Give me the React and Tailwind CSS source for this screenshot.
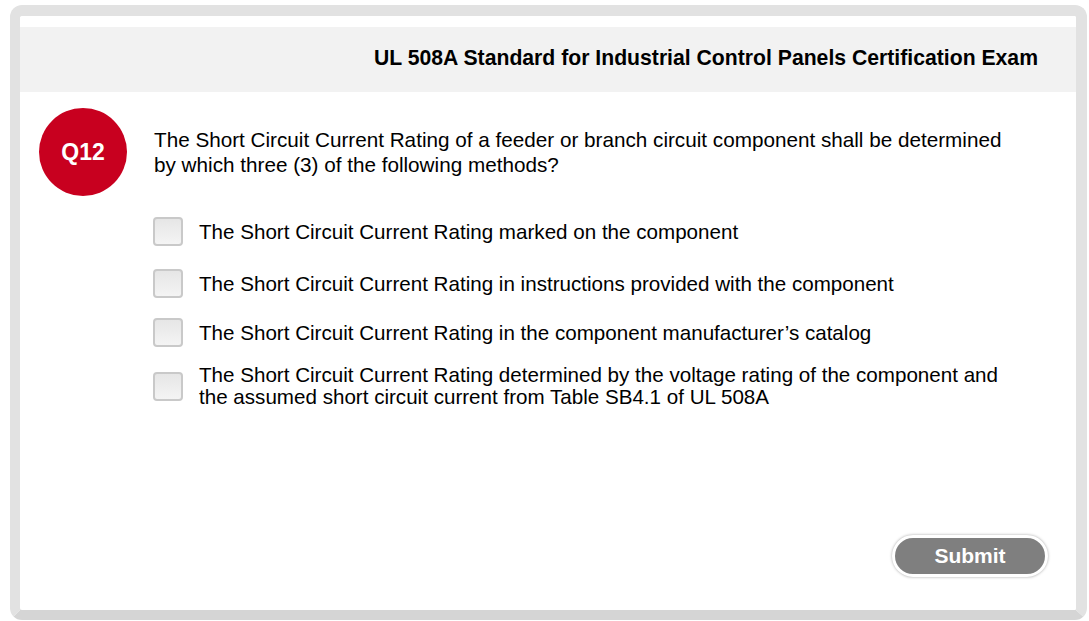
import React from "react";

const options = [
  { text: "The Short Circuit Current Rating marked on the component", mt: "mt-[40px]" },
  { text: "The Short Circuit Current Rating in instructions provided with the component", mt: "mt-[23px]" },
  { text: "The Short Circuit Current Rating in the component manufacturer\u2019s catalog", mt: "mt-[20px]" },
  {
    text: "The Short Circuit Current Rating determined by the voltage rating of the component and the assumed short circuit current from Table SB4.1 of UL 508A",
    mt: "mt-[17px]",
  },
];

function Option({ text, mt }) {
  return (
    <div className={`flex items-center ${mt} -ml-[1px]`}>
      <div className="w-[30px] h-[29px] shrink-0 rounded-[4px] border-2 border-[#c9c9c9] bg-gradient-to-b from-[#e6e6e6] to-[#f4f4f4]" />
      <div className="ml-[16px] w-[826px] text-[20.6px] leading-[22px] text-black">{text}</div>
    </div>
  );
}

export default function App() {
  return (
    <div
      className="w-[1089px] h-[621px] bg-white pt-[5px] pl-[10px]"
      style={{ fontFamily: '"Liberation Sans", Arial, sans-serif' }}
    >
      <div className="w-[1077px] h-[615px] rounded-[12px] border-l-[10px] border-t-[11px] border-r-[11px] border-b-[10px] border-[#e2e2e2] border-b-[#d5d5d5] bg-white flex flex-col">
        <div className="mt-[11px] h-[65px] bg-[#f2f2f2] flex items-center justify-end pr-[38px] pb-[3px]">
          <span className="text-[21.2px] font-bold text-black">
            UL 508A Standard for Industrial Control Panels Certification Exam
          </span>
        </div>
        <div className="flex-1 flex pl-[19px] pt-[16px]">
          <div className="w-[88px] h-[88px] shrink-0 rounded-full bg-[#c8001f] flex items-center justify-center">
            <span className="text-white font-bold text-[23px]">Q12</span>
          </div>
          <div className="ml-[27px] mt-[19px] flex flex-col">
            <div className="w-[870px] text-[20.7px] leading-[25px] text-black">
              The Short Circuit Current Rating of a feeder or branch circuit component shall be determined by which three (3) of the following methods?
            </div>
            {options.map((o, i) => (
              <Option key={i} {...o} />
            ))}
          </div>
        </div>
        <div className="flex justify-end pr-[28px] pb-[33px]">
          <button className="w-[156px] h-[42px] rounded-full border-[3px] border-white bg-[#7f7f7f] shadow-[0_0_3px_rgba(0,0,0,0.35)] flex items-center justify-center">
            <span className="text-white font-bold text-[21px]">Submit</span>
          </button>
        </div>
      </div>
    </div>
  );
}
